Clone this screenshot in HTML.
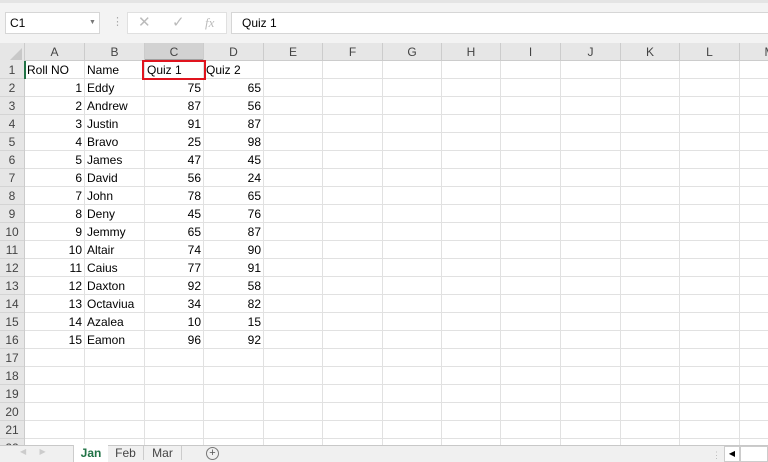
<!DOCTYPE html><html><head><style>
*{margin:0;padding:0;box-sizing:border-box}
body{width:768px;height:462px;overflow:hidden;background:#f3f3f3;font-family:"Liberation Sans",sans-serif;position:relative}
.a{position:absolute}
.c{position:absolute;font-size:12px;line-height:18px;white-space:nowrap;color:#000}
.h{position:absolute;font-size:12px;color:#444;text-align:center;line-height:18px}
</style></head><body>
<div class="a" style="left:0;top:0;width:768px;height:3px;background:#e4e4e4"></div>
<div class="a" style="left:5px;top:12px;width:95px;height:22px;background:#fff;border:1px solid #d6d6d6;font-size:12px;line-height:20px;padding-left:4px">C1<span style="position:absolute;left:83px;font-size:7px;color:#777">▼</span></div>
<div class="a" style="left:112px;top:15px;color:#aaa;font-size:11px">⋮</div>
<div class="a" style="left:127px;top:12px;width:100px;height:22px;background:#fff;border:1px solid #e0e0e0;color:#bbb;font-size:15px;line-height:20px"><span style="position:absolute;left:10px">✕</span><span style="position:absolute;left:44px">✓</span><span style="position:absolute;left:77px;font-family:'Liberation Serif',serif;font-style:italic;font-size:13px">fx</span></div>
<div class="a" style="left:231px;top:12px;width:540px;height:22px;background:#fff;border:1px solid #d6d6d6;font-size:12px;line-height:20px;padding-left:10px">Quiz 1</div>
<div class="a" style="left:0;top:43px;width:768px;height:402px;background:#fff"></div>
<div class="a" style="left:0;top:43px;width:768px;height:18px;background:#e6e6e6;border-bottom:1px solid #ccc"></div>
<div class="a" style="left:0;top:43px;width:25px;height:402px;background:#e6e6e6;border-right:1px solid #ccc"></div>
<div class="a" style="left:145px;top:43px;width:59px;height:18px;background:#d2d2d2;border-bottom:2px solid #a0a0a0"></div>
<div class="a" style="left:10px;top:48px;width:0;height:0;border-left:12px solid transparent;border-bottom:12px solid #c8c8c8"></div>
<div id="g"></div>
<div class="a" style="left:142px;top:60px;width:64px;height:20px;border:2px solid #e0141e"></div>
<div class="a" style="left:0;top:445px;width:768px;height:17px;background:#f0f0f0;border-top:1px solid #c8c8c8"></div>
<div class="a" style="left:20px;top:447px;color:#ccc;font-size:8px">◀&nbsp;&nbsp;&nbsp;&nbsp;&nbsp;&nbsp;▶</div>
<div class="a" style="left:73px;top:445px;width:1px;height:17px;background:#ccc"></div>
<div class="a" style="left:74px;top:444px;width:34px;height:18px;background:#fff;color:#217346;font-weight:bold;font-size:12px;text-align:center;line-height:18px">Jan</div>
<div class="a" style="left:108px;top:446px;width:36px;font-size:12px;text-align:center;color:#444;border-right:1px solid #ccc">Feb</div>
<div class="a" style="left:144px;top:446px;width:38px;font-size:12px;text-align:center;color:#444;border-right:1px solid #ccc">Mar</div>
<div class="a" style="left:206px;top:447px;width:13px;height:13px;border:1px solid #777;border-radius:50%;font-size:11px;line-height:11px;text-align:center;color:#555">+</div>
<div class="a" style="left:712px;top:450px;color:#bbb;font-size:9px">⋮</div>
<div class="a" style="left:724px;top:446px;width:16px;height:16px;background:#fff;border:1px solid #ccc;font-size:8px;text-align:center;line-height:14px">◀</div>
<div class="a" style="left:740px;top:446px;width:28px;height:16px;background:#fff;border:1px solid #ccc"></div>
<script>
var cols=[25,85,145,204,264,323,383,442,501,561,621,680,740,800],L="ABCDEFGHIJKLM";
var data=[["Roll NO","Name","Quiz 1","Quiz 2"],[1,"Eddy",75,65],[2,"Andrew",87,56],[3,"Justin",91,87],[4,"Bravo",25,98],[5,"James",47,45],[6,"David",56,24],[7,"John",78,65],[8,"Deny",45,76],[9,"Jemmy",65,87],[10,"Altair",74,90],[11,"Caius",77,91],[12,"Daxton",92,58],[13,"Octaviua",34,82],[14,"Azalea",10,15],[15,"Eamon",96,92]];
var h="";
for(var i=0;i<13;i++){h+='<div class="h" style="left:'+cols[i]+'px;top:43px;width:'+(cols[i+1]-cols[i])+'px;border-right:1px solid #ccc;height:18px">'+L[i]+'</div>';
h+='<div class="a" style="left:'+(cols[i+1]-1)+'px;top:61px;width:1px;height:384px;background:#e1e1e1"></div>';}
for(var r=1;r<=22;r++){var t=61+(r-1)*18;
h+='<div class="a" style="left:25px;top:'+(t+17)+'px;width:743px;height:1px;background:#e1e1e1"></div>';
h+='<div class="h" style="left:0;top:'+t+'px;width:24px;border-bottom:1px solid #d4d4d4;height:18px;font-size:12px">'+r+'</div>';
var d=data[r-1];if(d){for(var c=0;c<4;c++){var v=d[c],num=typeof v=="number";
h+='<div class="c" style="left:'+(cols[c]+2)+'px;top:'+t+'px;width:'+(cols[c+1]-cols[c]-5)+'px;text-align:'+(num?'right':'left')+'">'+v+'</div>';}}}
h+='<div class="a" style="left:24px;top:61px;width:2px;height:18px;background:#217346"></div>';
document.getElementById("g").innerHTML=h;
</script>
</body></html>
